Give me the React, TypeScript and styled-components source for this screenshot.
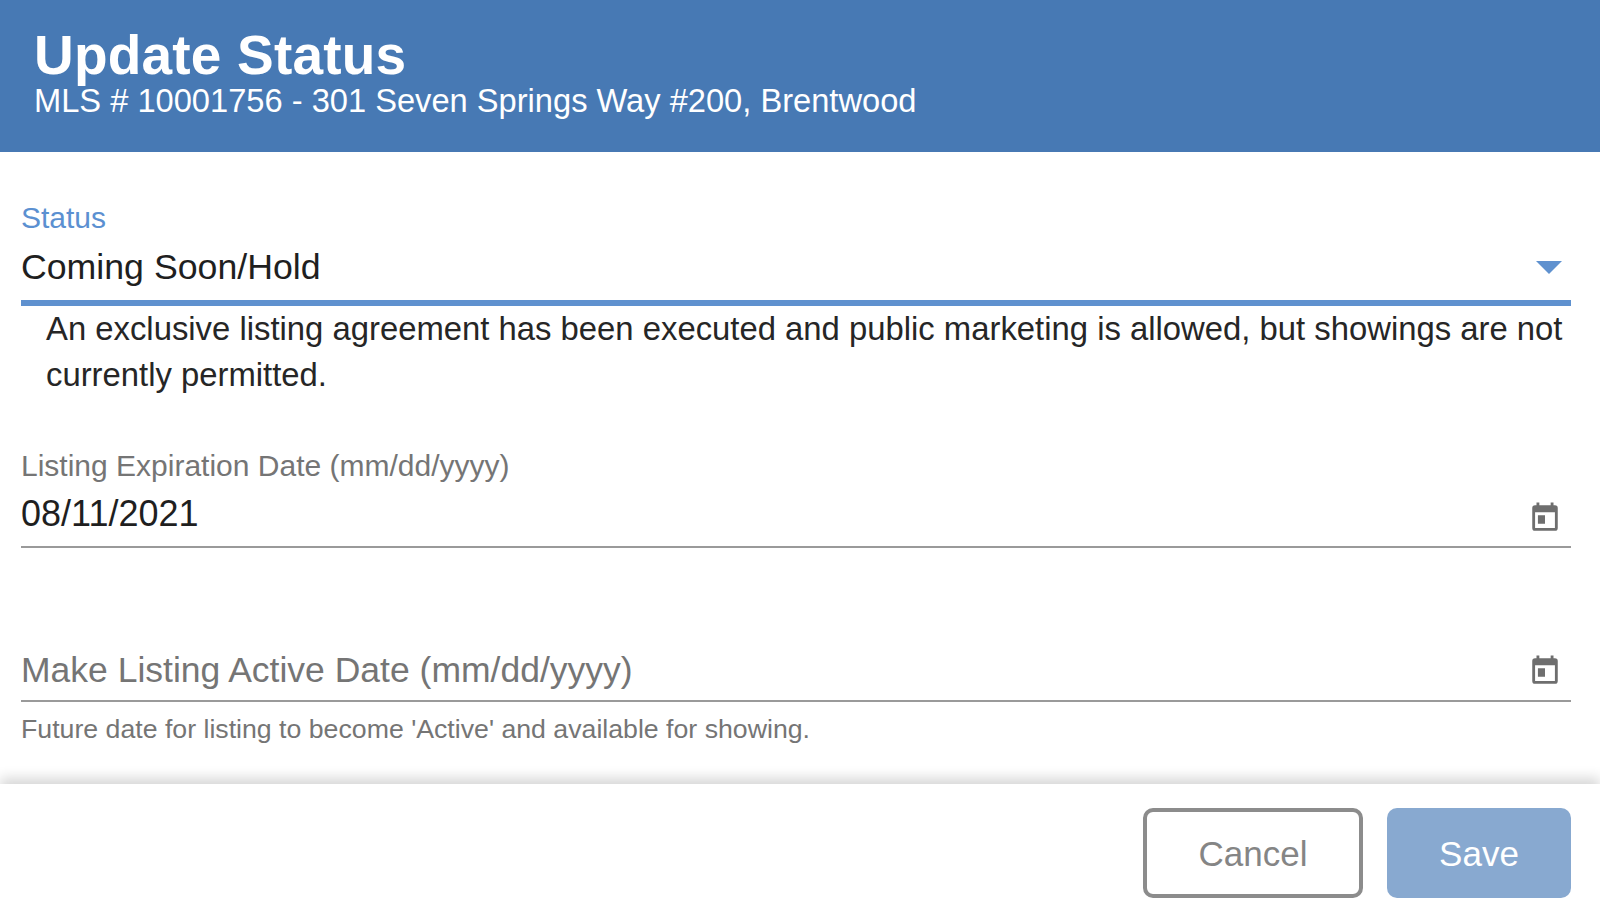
import React from "react";
import styled, { createGlobalStyle } from "styled-components";

const GlobalStyle = createGlobalStyle`
  html, body {
    margin: 0;
    padding: 0;
    background: #fff;
    font-family: "Liberation Sans", Arial, sans-serif;
  }
`;

const Page = styled.div`
  display: flex;
  flex-direction: column;
  width: 1600px;
  height: 914px;
  overflow: hidden;
`;

const Header = styled.header`
  height: 152px;
  box-sizing: border-box;
  padding: 28px 34px 0;
  background: #4779b4;
  color: #fff;
`;

const Title = styled.h1`
  margin: 0;
  font-size: 55px;
  line-height: 54px;
  font-weight: 700;
  letter-spacing: 0.2px;
`;

const Subtitle = styled.div`
  font-size: 32.65px;
  line-height: 38px;
  white-space: nowrap;
`;

const Form = styled.main`
  flex: 1;
  padding: 50px 29px 0 21px;
`;

const Field = styled.div<{ $mb: number }>`
  margin-bottom: ${(p) => p.$mb}px;
`;

const Label = styled.div<{ $active?: boolean }>`
  font-size: 30px;
  line-height: 32px;
  color: ${(p) => (p.$active ? "#5b90d1" : "#757575")};
`;

const Control = styled.div<{ $height: number; $focus?: boolean }>`
  display: flex;
  align-items: center;
  justify-content: space-between;
  height: ${(p) => p.$height}px;
  box-sizing: border-box;
  border-bottom: ${(p) => (p.$focus ? "6px solid #5f91cf" : "2px solid #9a9a9a")};
`;

const Value = styled.span<{ $size: number; $placeholder?: boolean }>`
  font-size: ${(p) => p.$size}px;
  color: ${(p) => (p.$placeholder ? "#757575" : "#1f1f1f")};
`;

const Arrow = styled.span`
  width: 0;
  height: 0;
  margin-right: 9px;
  border-left: 13.5px solid transparent;
  border-right: 13.5px solid transparent;
  border-top: 13px solid #5f91cf;
`;

const Description = styled.p`
  margin: 0;
  padding: 0 0 0 25px;
  font-size: 32.85px;
  line-height: 46px;
  color: #262626;
`;

const Helper = styled.div`
  margin-top: 12px;
  font-size: 26.7px;
  line-height: 30px;
  color: #757575;
`;

const Footer = styled.footer`
  display: flex;
  justify-content: flex-end;
  gap: 24px;
  height: 130px;
  box-sizing: border-box;
  padding: 24px 29px 0 0;
  background: #fff;
  box-shadow: 0 -6px 12px rgba(0, 0, 0, 0.16);
`;

const Button = styled.button<{ $primary?: boolean }>`
  width: ${(p) => (p.$primary ? 184 : 220)}px;
  height: 90px;
  padding: 1px 0 0;
  box-sizing: border-box;
  border-radius: 10px;
  border: ${(p) => (p.$primary ? "none" : "4px solid #8c8c8c")};
  background: ${(p) => (p.$primary ? "#88a9d0" : "#fff")};
  color: ${(p) => (p.$primary ? "#fff" : "#858585")};
  font-family: inherit;
  font-size: 35px;
`;

const IconSvg = styled.svg<{ $shift: number }>`
  width: 34px;
  height: 34px;
  margin: ${(p) => p.$shift}px 9px 0 0;
  fill: #6e6e6e;
`;

const CalendarIcon = ({ shift }: { shift: number }) => (
  <IconSvg $shift={shift} viewBox="0 0 24 24">
    <path d="M19 3h-1V1h-2v2H8V1H6v2H5a2 2 0 0 0-2 2v14a2 2 0 0 0 2 2h14a2 2 0 0 0 2-2V5a2 2 0 0 0-2-2zm0 16H5V8h14v11zM12 10H7v6h5v-6z" />
  </IconSvg>
);

export default function App() {
  return (
    <Page>
      <GlobalStyle />
      <Header>
        <Title>Update Status</Title>
        <Subtitle>MLS # 10001756 - 301 Seven Springs Way #200, Brentwood</Subtitle>
      </Header>
      <Form>
        <Field $mb={52}>
          <Label $active>Status</Label>
          <Control $height={72} $focus>
            <Value $size={35.7}>Coming Soon/Hold</Value>
            <Arrow />
          </Control>
          <Description>
            An exclusive listing agreement has been executed and public marketing is allowed, but showings are not currently permitted.
          </Description>
        </Field>
        <Field $mb={92}>
          <Label>Listing Expiration Date (mm/dd/yyyy)</Label>
          <Control $height={66}>
            <Value $size={36}>08/11/2021</Value>
            <CalendarIcon shift={7} />
          </Control>
        </Field>
        <Field $mb={0}>
          <Control $height={62}>
            <Value $size={35.5} $placeholder>
              Make Listing Active Date (mm/dd/yyyy)
            </Value>
            <CalendarIcon shift={2} />
          </Control>
          <Helper>Future date for listing to become 'Active' and available for showing.</Helper>
        </Field>
      </Form>
      <Footer>
        <Button>Cancel</Button>
        <Button $primary>Save</Button>
      </Footer>
    </Page>
  );
}
